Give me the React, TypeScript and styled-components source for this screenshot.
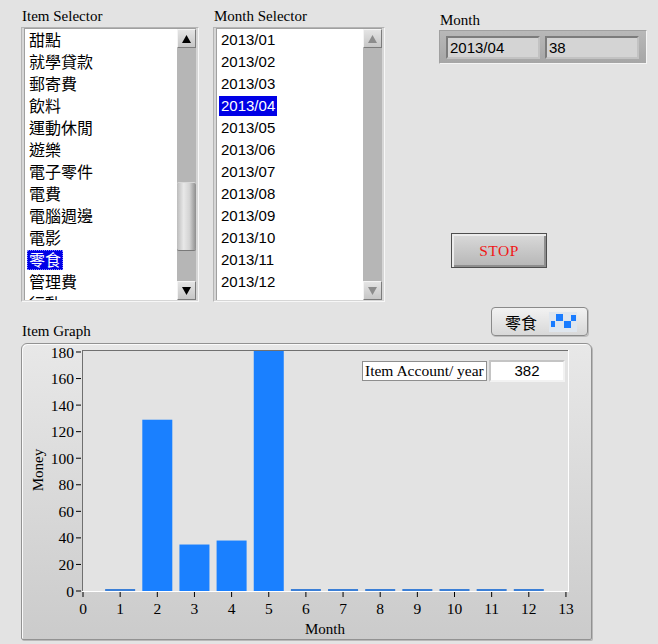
import React from "react";
import styled, { createGlobalStyle } from "styled-components";

const GlobalStyle = createGlobalStyle`
  html, body {
    margin: 0;
    padding: 0;
    background: #e3e3e3;
  }
  body {
    font-family: "Liberation Serif", "Noto Sans CJK TC", serif;
    color: #000;
  }
`;

const items = [
  "甜點",
  "就學貸款",
  "郵寄費",
  "飲料",
  "運動休閒",
  "遊樂",
  "電子零件",
  "電費",
  "電腦週邊",
  "電影",
  "零食",
  "管理費",
  "行動",
];
const months = Array.from({ length: 12 }, (_, i) => `2013/${String(i + 1).padStart(2, "0")}`);
const values = [0, 129, 35, 38, 185, 0, 0, 0, 0, 0, 0, 0];

// graph geometry, relative to the frame's inner box
const X = (v: number) => 61 + v * 37.15;
const Y = (v: number) => 247 - v * 1.3278;

const Arrow: React.FC<{ up?: boolean; disabled?: boolean }> = ({ up, disabled }) => (
  <svg width="9" height="8" viewBox="0 0 9 8">
    <polygon
      points={up ? "4.5,0 9,8 0,8" : "0,0 9,0 4.5,8"}
      fill={disabled ? "#8c8c8c" : "#000"}
    />
    <rect x="3.5" y={up ? 6 : 0} width="2" height="2" fill={disabled ? "#8c8c8c" : "#000"} />
  </svg>
);

const ListBox: React.FC<{
  rows: string[];
  selected: number;
  sans?: boolean;
  focused?: boolean;
  thumb?: { top: number; height: number };
}> = ({ rows, selected, sans, focused, thumb }) => (
  <ListFrame>
    <ListBody>
      {rows.map((r, i) => (
        <ListRow key={r}>
          <RowText $selected={i === selected} $focused={focused} $sans={sans}>
            {r}
          </RowText>
        </ListRow>
      ))}
    </ListBody>
    <Scrollbar>
      <ScrollButton>
        <Arrow up disabled={!thumb} />
      </ScrollButton>
      <ScrollTrack>{thumb && <Thumb $top={thumb.top} $height={thumb.height} />}</ScrollTrack>
      <ScrollButton>
        <Arrow disabled={!thumb} />
      </ScrollButton>
    </Scrollbar>
  </ListFrame>
);

const LegendIcon = () => (
  <svg width="28" height="20" viewBox="0 0 28 20">
    <rect x="0" y="0" width="28" height="20" fill="#dfe6ee" />
    <rect x="2" y="9" width="4" height="6" fill="#1a7cff" />
    <rect x="7" y="2" width="7" height="7" fill="#1a7cff" />
    <rect x="15" y="9" width="7" height="7" fill="#1a7cff" />
    <rect x="22" y="3" width="5" height="6" fill="#1a7cff" />
  </svg>
);

const Chart = () => {
  const yTicks = [0, 20, 40, 60, 80, 100, 120, 140, 160, 180];
  const xTicks = Array.from({ length: 14 }, (_, i) => i);
  return (
    <svg width="569" height="295" viewBox="0 0 569 295" style={{ display: "block" }}>
      <rect x="60" y="6" width="486" height="241" fill="#e3e3e3" />
      <line x1="60.5" y1="6" x2="60.5" y2="247" stroke="#707070" />
      <line x1="60" y1="6.5" x2="546" y2="6.5" stroke="#707070" />
      <line x1="546.5" y1="6" x2="546.5" y2="248" stroke="#ffffff" />
      <line x1="60" y1="247.5" x2="546" y2="247.5" stroke="#ffffff" />
      {values.map((v, i) => {
        const cx = X(i + 1);
        if (v === 0) {
          return <rect key={i} x={cx - 15} y={245} width={30} height={2} fill="#3b7fd6" />;
        }
        const top = Math.max(Y(v), 7);
        return <rect key={i} x={cx - 15} y={top} width={30} height={247 - top} fill="#1a80ff" />;
      })}
      <g fontFamily="Liberation Serif, serif" fontSize="15.5" fill="#000">
        {yTicks.map(t => (
          <g key={t}>
            <line x1="54" y1={Y(t)} x2="59" y2={Y(t)} stroke="#000" />
            <text x="52" y={Y(t) + 5.5} textAnchor="end">
              {t}
            </text>
          </g>
        ))}
        {xTicks.map(t => (
          <g key={t}>
            <line x1={X(t)} y1="248" x2={X(t)} y2="253" stroke="#000" />
            <text x={X(t)} y="270" textAnchor="middle">
              {t}
            </text>
          </g>
        ))}
        <text x="303" y="290" textAnchor="middle" fontSize="15">
          Month
        </text>
        <text x="0" y="0" textAnchor="middle" fontSize="15" transform="translate(21 126) rotate(-90)">
          Money
        </text>
      </g>
    </svg>
  );
};

const App: React.FC = () => {
  return (
    <Panel>
      <GlobalStyle />
      <TopRow>
        <Selector $width={178}>
          <Label>Item Selector</Label>
          <ListBox rows={items} selected={10} focused thumb={{ top: 135, height: 67 }} />
        </Selector>
        <Selector $width={172} $gap={14}>
          <Label>Month Selector</Label>
          <ListBox rows={months} selected={3} sans />
        </Selector>
        <RightColumn>
          <Label>Month</Label>
          <Cluster>
            <Field>2013/04</Field>
            <Field>38</Field>
          </Cluster>
          <StopButton>STOP</StopButton>
        </RightColumn>
      </TopRow>

      <GraphHeader>
        <GraphLabel>Item Graph</GraphLabel>
        <LegendButton>
          <LegendText>零食</LegendText>
          <LegendIcon />
        </LegendButton>
      </GraphHeader>

      <GraphFrame>
        <Chart />
        <AccountIndicator>
          <AccountLabel>Item Account/ year</AccountLabel>
          <AccountValue>382</AccountValue>
        </AccountIndicator>
      </GraphFrame>
    </Panel>
  );
};

const Panel = styled.div`
  width: 658px;
  height: 644px;
  overflow: hidden;
  background: #e3e3e3;
`;

const TopRow = styled.div`
  display: flex;
  padding: 8px 0 0 21px;
  height: 294px;
`;

const Selector = styled.div<{ $width: number; $gap?: number }>`
  display: flex;
  flex-direction: column;
  width: ${p => p.$width}px;
  margin-left: ${p => p.$gap ?? 0}px;
`;

const Label = styled.div`
  height: 19px;
  font-size: 15px;
  line-height: 16px;
  padding-left: 1px;
  white-space: nowrap;
`;

const ListFrame = styled.div`
  box-sizing: border-box;
  height: 275px;
  display: flex;
  padding: 0 2px 1px 2px;
  background: #d6d6d6;
  border: 1px solid;
  border-color: #b4b4b4 #f7f7f7 #f7f7f7 #b4b4b4;
`;

const ListBody = styled.div`
  flex: 1;
  background: #fff;
  overflow: hidden;
  padding-left: 2px;
  border-top: 1px solid #a0a0a0;
  border-left: 1px solid #a0a0a0;
`;

const ListRow = styled.div`
  height: 22px;
  display: flex;
  align-items: center;
`;

const RowText = styled.span<{ $selected: boolean; $focused?: boolean; $sans?: boolean }>`
  padding: 0 2px;
  height: 20px;
  line-height: ${p => (p.$sans ? 20 : 19)}px;
  font-size: ${p => (p.$sans ? 15 : 16)}px;
  font-family: ${p =>
    p.$sans ? `"Liberation Sans", Arial, sans-serif` : `"Noto Sans CJK TC", sans-serif`};
  background: ${p => (p.$selected ? "#0000e6" : "transparent")};
  color: ${p => (p.$selected ? "#fff" : "#000")};
  outline: ${p => (p.$selected && p.$focused ? "1px dotted #8080ff" : "none")};
  outline-offset: -1px;
`;

const Scrollbar = styled.div`
  width: 19px;
  display: flex;
  flex-direction: column;
  background: #b6b6b6;
  border-top: 1px solid #a0a0a0;
`;

const ScrollButton = styled.div`
  box-sizing: border-box;
  height: 19px;
  display: flex;
  align-items: center;
  justify-content: center;
  background: linear-gradient(#e4e4e4, #c6c6c6);
  border: 1px solid;
  border-color: #f4f4f4 #7c7c7c #7c7c7c #f4f4f4;
`;

const ScrollTrack = styled.div`
  flex: 1;
  display: flex;
  flex-direction: column;
`;

const Thumb = styled.div<{ $top: number; $height: number }>`
  margin-top: ${p => p.$top}px;
  height: ${p => p.$height}px;
  border-radius: 2px;
  background: linear-gradient(to right, #bcbcbc, #e8e8e8 35%, #d4d4d4 65%, #8e8e8e);
  box-shadow: 0 1px 0 #7a7a7a, 0 -1px 0 #d8d8d8;
`;

const RightColumn = styled.div`
  display: flex;
  flex-direction: column;
  align-items: flex-start;
  margin-left: 54px;
  padding-top: 4px;
`;

const Cluster = styled.div`
  box-sizing: border-box;
  width: 208px;
  height: 34px;
  display: flex;
  gap: 5px;
  padding: 5px 6px 4px 6px;
  background: linear-gradient(#b8b8b8, #a6a6a6);
  border: 1px solid;
  border-color: #a0a0a0 #f4f4f4 #f4f4f4 #a0a0a0;
  margin-top: -1px;
`;

const Field = styled.div`
  box-sizing: border-box;
  width: 94px;
  height: 23px;
  padding-left: 2px;
  background: #d4d4d4;
  border: 2px solid;
  border-color: #7c7c7c #c2c2c2 #c2c2c2 #7c7c7c;
  font-family: "Liberation Sans", Arial, sans-serif;
  font-size: 15px;
  line-height: 19px;
`;

const StopButton = styled.div`
  box-sizing: border-box;
  margin: 169px 0 0 12px;
  width: 96px;
  height: 35px;
  display: flex;
  align-items: center;
  justify-content: center;
  border: 1px solid #4e4e4e;
  background: linear-gradient(#dadada, #c4c4c4 60%, #b6b6b6);
  box-shadow: inset 2px 2px 0 #ececec, inset -2px -2px 0 #8e8e8e;
  color: #f01818;
  font-size: 15.5px;
  letter-spacing: 0.5px;
`;

const GraphHeader = styled.div`
  box-sizing: border-box;
  display: flex;
  justify-content: space-between;
  align-items: flex-start;
  width: 588px;
  height: 36px;
  margin-top: 5px;
  padding-left: 22px;
`;

const GraphLabel = styled.div`
  align-self: flex-end;
  margin-bottom: 4px;
  font-size: 15px;
  line-height: 15px;
`;

const LegendButton = styled.div`
  box-sizing: border-box;
  width: 97px;
  height: 29px;
  display: flex;
  align-items: center;
  gap: 12px;
  padding-left: 13px;
  border: 1px solid #8a8a8a;
  border-radius: 4px;
  background: linear-gradient(#f2f2f2, #d8d8d8);
  box-shadow: 1px 1px 0 #bdbdbd;
`;

const LegendText = styled.span`
  font-family: "Noto Sans CJK TC", sans-serif;
  font-size: 16px;
  line-height: 20px;
`;

const GraphFrame = styled.div`
  position: relative;
  box-sizing: border-box;
  margin-left: 21px;
  width: 571px;
  height: 297px;
  border: 1px solid #929292;
  border-radius: 6px 6px 2px 2px;
  background: linear-gradient(#e8e8e8, #cbcbcb);
  box-shadow: inset 1px 1px 0 #fafafa, 1px 1px 0 #b8b8b8;
`;

const AccountIndicator = styled.div`
  position: absolute;
  left: 340px;
  top: 16px;
  display: flex;
  align-items: center;
  gap: 2px;
`;

const AccountLabel = styled.div`
  box-sizing: border-box;
  width: 125px;
  height: 20px;
  padding: 0 2px;
  background: #fff;
  border: 1px solid #8e8e8e;
  font-size: 15.5px;
  line-height: 18px;
  white-space: nowrap;
`;

const AccountValue = styled.div`
  box-sizing: border-box;
  width: 76px;
  height: 22px;
  background: #fff;
  border: 2px solid;
  border-color: #c4c4c4 #f2f2f2 #f2f2f2 #c4c4c4;
  text-align: center;
  font-family: "Liberation Sans", Arial, sans-serif;
  font-size: 15px;
  line-height: 18px;
`;

export default App;
